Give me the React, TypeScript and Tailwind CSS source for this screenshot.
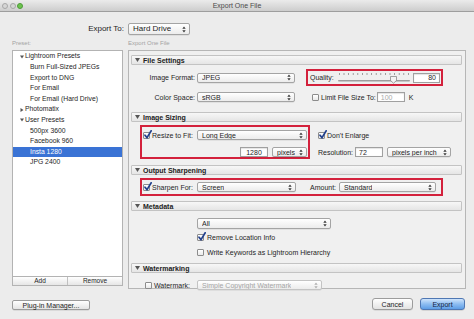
import React from "react";

type SelectProps = { text: string; className: string; muted?: boolean };

function Arrows({ muted }: { muted?: boolean }) {
  return (
    <svg width="4" height="7" viewBox="0 0 4 7" className="shrink-0">
      <path d="M0.3 2.8L2 0.6L3.7 2.8Z M0.3 4.2L2 6.4L3.7 4.2Z" fill={muted ? "#b0b0b0" : "#3a3a3a"} />
    </svg>
  );
}

function Select({ text, className, muted }: SelectProps) {
  return (
    <div
      className={`flex shrink-0 items-center justify-between rounded-[2px] border bg-gradient-to-b from-white to-[#ececec] pl-[4px] pr-[3px] text-[7px] leading-none shadow-[0_0.5px_0.5px_rgba(0,0,0,0.12)] ${
        muted ? "border-[#c4c4c4] text-[#a5a5a5]" : "border-[#a4a4a4] text-[#1e1e1e]"
      } ${className}`}
    >
      <span className="truncate">{text}</span>
      <Arrows muted={muted} />
    </div>
  );
}

function Field({ text, className }: { text: string; className: string }) {
  return (
    <div
      className={`flex shrink-0 items-center border border-[#a0a0a0] bg-white px-[3px] text-[7px] leading-none shadow-[inset_0_0.5px_1px_rgba(0,0,0,0.2)] ${className}`}
    >
      {text}
    </div>
  );
}

function Check({ on }: { on?: boolean }) {
  return (
    <span className="relative inline-block h-[7px] w-[7px] shrink-0 rounded-[1px] border border-[#8c8c8c] bg-gradient-to-b from-white to-[#e9e9e9]">
      {on && (
        <svg className="absolute -top-[3px] left-0" width="8" height="9" viewBox="0 0 8 9">
          <path d="M1 5.2L3 7.6L7.2 0.8" stroke="#22418c" strokeWidth="1.7" fill="none" strokeLinecap="round" />
        </svg>
      )}
    </span>
  );
}

function Header({ title }: { title: string }) {
  return (
    <div className="flex h-[10px] shrink-0 items-center rounded-[1px] border border-[#c3c3c3] bg-gradient-to-b from-[#f7f7f7] to-[#e5e5e5] pl-[3px] text-[7px] font-bold leading-none text-[#222]">
      <svg width="5" height="4" viewBox="0 0 5 4" className="mr-[3px]">
        <path d="M0 0H5L2.5 4Z" fill="#555" />
      </svg>
      {title}
    </div>
  );
}

function Tri({ open }: { open: boolean }) {
  return open ? (
    <svg width="4" height="4" viewBox="0 0 4 4" className="mr-[1px] shrink-0">
      <path d="M0 0.5H4L2 3.5Z" fill="#555" />
    </svg>
  ) : (
    <svg width="4" height="4" viewBox="0 0 4 4" className="mr-[1px] shrink-0">
      <path d="M0.5 0V4L3.5 2Z" fill="#555" />
    </svg>
  );
}

const presets = [
  { label: "Lightroom Presets", group: true, open: true },
  { label: "Burn Full-Sized JPEGs" },
  { label: "Export to DNG" },
  { label: "For Email" },
  { label: "For Email (Hard Drive)" },
  { label: "Photomatix", group: true, open: false },
  { label: "User Presets", group: true, open: true },
  { label: "500px 3600" },
  { label: "Facebook 960" },
  { label: "Insta 1280", selected: true },
  { label: "JPG 2400" },
];

function Slider() {
  const ticks = Array.from({ length: 16 }, (_, i) => 2 + i * 4.6);
  return (
    <svg width="74" height="13" viewBox="0 0 74 13" className="shrink-0">
      {ticks.map((x) => (
        <rect key={x} x={x} y="2" width="0.8" height="2" fill="#8a8a8a" />
      ))}
      <rect x="1" y="9" width="72" height="1.6" rx="0.8" fill="#9d9d9d" />
      <path d="M53.5 5.5H59.5V9.5L56.5 12.2L53.5 9.5Z" fill="#f4f4f4" stroke="#7d7d7d" strokeWidth="0.7" />
    </svg>
  );
}

export default function App() {
  return (
    <div className="h-[319px] w-[474px] overflow-hidden whitespace-nowrap bg-[#ececec] font-['Liberation_Sans',Arial,sans-serif] text-[#1e1e1e]">
      {/* title bar */}
      <div className="grid h-[12px] grid-cols-[1fr_auto_1fr] items-center border-b border-[#9e9e9e] bg-gradient-to-b from-[#ebebeb] to-[#cdcdcd]">
        <div className="flex items-center gap-[1.5px] pl-[2px]">
          <span className="h-[6px] w-[6px] rounded-full border border-[#a6a6a6] bg-[#d6d6d6]" />
          <span className="h-[6px] w-[6px] rounded-full border border-[#a6a6a6] bg-[#d6d6d6]" />
          <span className="h-[6px] w-[6px] rounded-full border border-[#4f9a3a] bg-[#6cc44e]" />
        </div>
        <div className="text-[7px] leading-none text-[#4b4b4b]">Export One File</div>
        <div />
      </div>

      {/* export to */}
      <div className="mt-[11px] flex h-[12px] items-center">
        <div className="w-[124px] text-right text-[8px] leading-none">Export To:</div>
        <Select text="Hard Drive" className="ml-[4px] h-[12px] w-[62px] text-[8px]" />
      </div>

      <div className="mt-[4px] flex h-[8px] items-center pl-[12px] text-[6px] leading-none text-[#a3a3a3]">
        <div className="w-[116px]">Preset:</div>
        <div>Export One File</div>
      </div>

      {/* main */}
      <div className="mt-[3px] flex pl-[12px]">
        <div className="w-[111px]">
          <div className="h-[227px] border border-[#b3b3b3] bg-white pt-[0.5px]">
            {presets.map((p) => (
              <div
                key={p.label}
                className={`flex h-[10.6px] items-center text-[6.8px] leading-none ${
                  p.selected ? "bg-[#3a73d5] text-white" : ""
                } ${p.group ? "pl-[7px]" : "pl-[17px]"}`}
              >
                {p.group && <Tri open={!!p.open} />}
                {p.label}
              </div>
            ))}
          </div>
          <div className="flex h-[9px] border border-t-0 border-[#b3b3b3] bg-gradient-to-b from-white to-[#e6e6e6] text-[6.5px] leading-none">
            <div className="flex flex-1 items-center justify-center">Add</div>
            <div className="flex flex-1 items-center justify-center border-l border-[#c0c0c0]">Remove</div>
          </div>
          <div className="mt-[14px] flex h-[10px] w-[78px] items-center justify-center rounded-[2px] border border-[#9c9c9c] bg-gradient-to-b from-white to-[#e4e4e4] text-[7px] leading-none shadow-[0_0.5px_0.5px_rgba(0,0,0,0.15)]">
            Plug-in Manager...
          </div>
        </div>

        <div className="ml-[5px] w-[338px]">
          <div className="flex h-[239px] flex-col gap-[1px] border border-[#b6b6b6] bg-[#f0f0f0] pl-[2px] pr-[3px] pt-[4px]">
            {/* File Settings */}
            <Header title="File Settings" />
            <div className="h-[45px] shrink-0 text-[7px] leading-none">
              <div className="mt-[3px] flex h-[17px] items-center">
                <div className="w-[64px] text-right">Image Format:</div>
                <Select text="JPEG" className="ml-[2px] h-[10px] w-[98px]" />
                <div className="ml-[11px] flex h-[17px] w-[137px] items-center border-2 border-[#d3213c] pl-[2px]">
                  <span className="w-[27px] shrink-0">Quality:</span>
                  <Slider />
                  <Field text="80" className="ml-[2px] h-[10px] w-[27px] justify-end" />
                </div>
              </div>
              <div className="mt-[5px] flex h-[12px] items-center">
                <div className="w-[64px] text-right">Color Space:</div>
                <Select text="sRGB" className="ml-[2px] h-[10px] w-[98px]" />
                <span className="ml-[17px] flex">
                  <Check />
                </span>
                <span className="ml-[2px] shrink-0 pr-[1px]">Limit File Size To:</span>
                <Field text="100" className="h-[10px] w-[28px] text-[#a8a8a8]" />
                <span className="ml-[4px]">K</span>
              </div>
            </div>

            {/* Image Sizing */}
            <Header title="Image Sizing" />
            <div className="flex h-[41px] shrink-0 pl-[9px] pt-[2px] text-[7px] leading-none">
              <div className="flex h-[34px] w-[170px] flex-col border-2 border-[#d3213c]">
                <div className="mt-[3px] flex h-[10px] items-center pl-[1px]">
                  <Check on />
                  <span className="ml-[2px] w-[45px] shrink-0">Resize to Fit:</span>
                  <Select text="Long Edge" className="h-[10px] w-[110px]" />
                </div>
                <div className="mt-[7px] flex h-[10px] items-center justify-end pr-[1px]">
                  <Field text="1280" className="h-[10px] w-[28px] justify-center" />
                  <Select text="pixels" className="ml-[4px] h-[10px] w-[35px]" />
                </div>
              </div>
              <div className="ml-[8px] flex flex-col">
                <div className="mt-[5px] flex h-[10px] items-center">
                  <Check on />
                  <span className="ml-[2px]">Don&apos;t Enlarge</span>
                </div>
                <div className="mt-[7px] flex h-[10px] items-center">
                  <span className="w-[37px] shrink-0">Resolution:</span>
                  <Field text="72" className="h-[10px] w-[28px]" />
                  <Select text="pixels per inch" className="ml-[4px] h-[10px] w-[64px]" />
                </div>
              </div>
            </div>

            {/* Output Sharpening */}
            <Header title="Output Sharpening" />
            <div className="h-[24px] shrink-0 pl-[9px] pt-[2px] text-[7px] leading-none">
              <div className="flex h-[18px] w-[303px] items-center border-2 border-[#d3213c] pl-[1px]">
                <Check on />
                <span className="ml-[2px] w-[45px] shrink-0">Sharpen For:</span>
                <Select text="Screen" className="h-[10px] w-[99px]" />
                <span className="ml-[14px] w-[29px] shrink-0">Amount:</span>
                <Select text="Standard" className="h-[10px] w-[97px]" />
              </div>
            </div>

            {/* Metadata */}
            <Header title="Metadata" />
            <div className="h-[50px] shrink-0 pl-[66px] text-[7px] leading-none">
              <Select text="All" className="mt-[6px] h-[11px] w-[134px]" />
              <div className="mt-[3px] flex h-[10px] items-center">
                <Check on />
                <span className="ml-[3px]">Remove Location Info</span>
              </div>
              <div className="mt-[5px] flex h-[10px] items-center">
                <Check />
                <span className="ml-[3px]">Write Keywords as Lightroom Hierarchy</span>
              </div>
            </div>

            {/* Watermarking */}
            <Header title="Watermarking" />
            <div className="h-[19px] shrink-0 pl-[14px] text-[7px] leading-none">
              <div className="mt-[6px] flex h-[10px] items-center">
                <Check />
                <span className="ml-[2px] w-[43px] shrink-0">Watermark:</span>
                <Select text="Simple Copyright Watermark" muted className="h-[10px] w-[125px]" />
              </div>
            </div>
          </div>

          <div className="mt-[9px] flex justify-end pr-[1px] text-[7px] leading-none">
            <div className="flex h-[12px] w-[41px] items-center justify-center rounded-[3px] border border-[#9c9c9c] bg-gradient-to-b from-white to-[#e3e3e3] shadow-[0_0.5px_0.5px_rgba(0,0,0,0.15)]">
              Cancel
            </div>
            <div className="ml-[7px] flex h-[12px] w-[45px] items-center justify-center rounded-[3px] border border-[#4f77b3] bg-gradient-to-b from-[#cfe4fb] via-[#8dbdf1] to-[#5d9de6] text-[#14233f] shadow-[0_0.5px_0.5px_rgba(0,0,0,0.2)]">
              Export
            </div>
          </div>
        </div>
      </div>
    </div>
  );
}
